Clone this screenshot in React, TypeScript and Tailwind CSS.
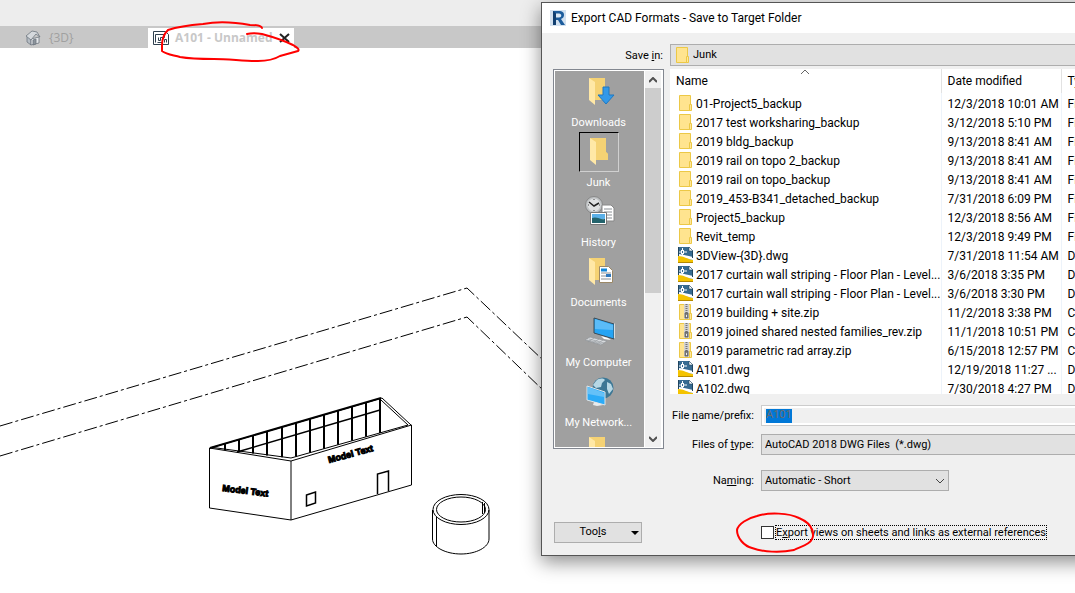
import React from "react";

type FileKind = "folder" | "dwg" | "zip";

const files: { name: string; date: string; kind: FileKind }[] = [
  { name: "01-Project5_backup", date: "12/3/2018 10:01 AM", kind: "folder" },
  { name: "2017 test worksharing_backup", date: "3/12/2018 5:10 PM", kind: "folder" },
  { name: "2019 bldg_backup", date: "9/13/2018 8:41 AM", kind: "folder" },
  { name: "2019 rail on topo 2_backup", date: "9/13/2018 8:41 AM", kind: "folder" },
  { name: "2019 rail on topo_backup", date: "9/13/2018 8:41 AM", kind: "folder" },
  { name: "2019_453-B341_detached_backup", date: "7/31/2018 6:09 PM", kind: "folder" },
  { name: "Project5_backup", date: "12/3/2018 8:56 AM", kind: "folder" },
  { name: "Revit_temp", date: "12/3/2018 9:49 PM", kind: "folder" },
  { name: "3DView-{3D}.dwg", date: "7/31/2018 11:54 AM", kind: "dwg" },
  { name: "2017 curtain wall striping - Floor Plan - Level...", date: "3/6/2018 3:35 PM", kind: "dwg" },
  { name: "2017 curtain wall striping - Floor Plan - Level...", date: "3/6/2018 3:30 PM", kind: "dwg" },
  { name: "2019 building + site.zip", date: "11/2/2018 3:38 PM", kind: "zip" },
  { name: "2019 joined shared nested families_rev.zip", date: "11/1/2018 10:51 PM", kind: "zip" },
  { name: "2019 parametric rad array.zip", date: "6/15/2018 12:57 PM", kind: "zip" },
  { name: "A101.dwg", date: "12/19/2018 11:27 ...", kind: "dwg" },
  { name: "A102.dwg", date: "7/30/2018 4:27 PM", kind: "dwg" },
];

const typeNames: Record<FileKind, string> = {
  folder: "File folder",
  dwg: "DWG File",
  zip: "Compressed",
};

function FileIcon({ kind }: { kind: FileKind }) {
  if (kind === "dwg") {
    return (
      <svg width="16" height="16" viewBox="0 0 16 16" className="shrink-0">
        <path d="M0 0h11l4 4v12H0z" fill="#376b91" />
        <path d="M11 0v4h4z" fill="#fff" stroke="#20455f" strokeWidth=".6" />
        <path d="M0 8c4 0 8 2 11 4l4 1v3H0z" fill="#f4c300" />
        <path d="M0 7c5 0 9 2 15 3v3C9 12 6 9 0 9z" fill="#fff" />
        <path d="M4.500 1v7M1 5h8" stroke="#fff" />
        <rect x="3.500" y="3.500" width="2" height="3" fill="#376b91" stroke="#fff" />
        <path d="M.5 0v9M14.500 4v7" stroke="#20455f" />
        <path d="M0 15.500h15" stroke="#b58a00" />
      </svg>
    );
  }
  return (
    <svg width="16" height="16" viewBox="0 0 16 16" className="shrink-0">
      <path d="M1.500 .5h11v15h-11z" fill="#ffe48f" stroke="#ecc846" />
      <path d="M11.500 9.500h2v6h-2z" fill="#ffe79c" stroke="#ecc846" />
      {kind === "zip" && (
        <>
          <path d="M6 0h5v15H6z" fill="#d2d2d2" />
          <path d="M8.500 0v9" stroke="#777" strokeWidth="2" strokeDasharray="1 1" />
          <path d="M7 9h3v5H7z" fill="#888" stroke="#555" strokeWidth=".7" />
          <path d="M8 11h1v2H8z" fill="#eee" />
        </>
      )}
    </svg>
  );
}

function PlaceFolder({ x = 0 }: { x?: number }) {
  return (
    <g transform={`translate(${x} 0)`}>
      <path d="M6 2h16v14l2 2v6H10z" fill="#f0c75e" />
      <path d="M6 2h16v14l2 2v6H12z" fill="#f5d274" />
      <path d="M6 2l6 4v23l-6-5z" fill="#ffe8a6" />
    </g>
  );
}

function Monitor() {
  return (
    <g>
      <path d="M11 2l20 6v15l-20-6z" fill="#25a4f4" stroke="#3b4a55" />
      <path d="M12 3l18 6v5L12 13z" fill="#5bbcf8" />
      <path d="M31 8l1-1v15l-1 1z" fill="#d9dde0" />
    </g>
  );
}

const places: { label: string; icon: React.ReactNode; active?: boolean }[] = [
  {
    label: "Downloads",
    icon: (
      <>
        <PlaceFolder />
        <path d="M20 11h6v8h5l-8 9-8-9h5z" fill="#3399e8" stroke="#1f78c0" />
      </>
    ),
  },
  { label: "Junk", icon: <PlaceFolder x={1} />, active: true },
  {
    label: "History",
    icon: (
      <>
        <circle cx="11" cy="9" r="7.500" fill="#dfe1e2" stroke="#bfc2c4" strokeWidth="2" />
        <circle cx="11" cy="9" r="8.500" stroke="#777" strokeWidth=".7" fill="none" />
        <path d="M6 6l5 4 5-3" fill="none" stroke="#222" strokeWidth="1.500" />
        <path d="M11 3v1M11 14v1M5 9h1M16 9h1" stroke="#444" />
        <path d="M19 9h9l3 3v13H19z" fill="#fff" stroke="#888" />
        <path d="M21 13h8M21 16h8M21 19h8M21 22h8" stroke="#8a8f94" />
        <path d="M7.500 16.500h16v12h-16z" fill="#fff" stroke="#777" />
        <path d="M9 18h13v5H9z" fill="#5bb0e8" />
        <path d="M9 22c5-2 8 2 13 1v4H9z" fill="#23636c" />
      </>
    ),
  },
  {
    label: "Documents",
    icon: (
      <>
        <PlaceFolder />
        <path d="M16.500 10.500h9l4 4v12h-13z" fill="#fff" stroke="#9b8866" />
        <path d="M18 17h10M18 20h10M18 23h10" stroke="#8a8f94" />
        <path d="M18 14h6" stroke="#1386d6" strokeWidth="3" />
        <path d="M23 18h5v3h-5z" fill="#3179bd" />
      </>
    ),
  },
  {
    label: "My Computer",
    icon: (
      <>
        <Monitor />
        <path d="M18 20l7 2 3 2-7-1z" fill="#fff" />
        <path d="M7 21l17 4-6 4-16-5z" fill="#d7dadd" stroke="#8f9498" strokeWidth=".7" />
        <path d="M6 23l15 4M4 24l15 4M11 22l-6 4M16 23l-6 4M20 24l-6 4" stroke="#8f9498" strokeWidth=".6" />
      </>
    ),
  },
  {
    label: "My Network...",
    icon: (
      <>
        <circle cx="20" cy="12" r="10.500" fill="#3c7795" />
        <path d="M13 5c3-3 7-3 9-1l-3 3-1 4-5 1-3-3zM24 6l4 2 2 5-4 5-2-5z" fill="#b7d8e5" />
        <path d="M4 10l18 6v13L4 24z" fill="#2cabf7" stroke="#dfe5e8" />
        <path d="M5 11l16 6v4L5 18z" fill="#65c1f8" />
        <path d="M11 26l4 1 5 2-6 1-4-1z" fill="#e8ebed" />
      </>
    ),
  },
];

function Chevron({ up, className }: { up?: boolean; className?: string }) {
  return (
    <svg width="10" height="6" viewBox="0 0 10 6" className={className}>
      <path d={up ? "M1 5l4-4 4 4" : "M1 1l4 4 4-4"} fill="none" stroke="currentColor" />
    </svg>
  );
}

function SitePlan() {
  const mullions = [225, 239, 253, 267, 282, 296, 310, 324, 338, 352, 366, 380];
  return (
    <svg width="1075" height="545" viewBox="0 48 1075 545" fill="none" stroke="#000" className="block">
      {/* property lines */}
      <g strokeDasharray="13 3 3 3">
        <path d="M0 426L467 288L545 362" />
        <path d="M0 456L467 317L545 392" />
      </g>

      {/* building */}
      <path d="M209.500 448v60L291 520V461z" />
      <path d="M291 520L411.500 485V425L291 461" />
      <path d="M210 448L382 398L411 425" />
      <path d="M213 447.500L291 458L408 425L381 400" />
      <path d="M210 448L381 398" strokeWidth="2" />
      <path d="M237 452L380 410" strokeWidth="1.500" />
      {mullions.map((x) => (
        <path
          key={x}
          strokeWidth="2"
          d={`M${x} ${448 - (x - 210) * 0.291}V${x < 291 ? 448 + (x - 210) * 0.13 : 458 - (x - 291) * 0.282}`}
        />
      ))}
      <path d="M306.500 495l9-3v11l-9 3z" strokeWidth="1.500" />
      <path d="M377.500 494v-20l11-3v20" strokeWidth="1.500" />
      <g fill="#000" strokeWidth="1" fontSize="9" fontWeight="700" fontFamily="Liberation Sans, sans-serif">
        <text transform="translate(222 491) rotate(7)">Model Text</text>
        <text transform="translate(329 463) rotate(-15)">Model Text</text>
      </g>

      {/* round tank */}
      <ellipse cx="461" cy="509.500" rx="28" ry="15" />
      <ellipse cx="461" cy="509.500" rx="24.500" ry="12.500" />
      <path d="M432.500 510v29c0 8 13 15 28.500 15s28-7 28-15v-29M436.500 517v29M482.500 502v12M484.500 503v10" />
    </svg>
  );
}

function PlacesBar() {
  return (
    <div className="flex h-[380px] border border-[#828790] bg-white p-px">
      <div className="flex-1 overflow-hidden bg-[#a0a0a0] pr-[2px] text-white">
        {places.map((place) => (
          <button key={place.label} className="flex h-[60px] w-full flex-col items-center justify-start pt-px">
            <span
              className={
                place.active
                  ? "flex size-10 shrink-0 items-center justify-center border border-t-black border-l-black border-r-[#d0d0d0] border-b-[#d0d0d0]"
                  : "flex size-10 shrink-0 items-center justify-center"
              }
            >
              <svg width="32" height="32" viewBox="0 0 32 32">{place.icon}</svg>
            </span>
            <span className="leading-[22px]">{place.label}</span>
          </button>
        ))}
        <div className="flex justify-center pt-1">
          <svg width="32" height="32" viewBox="0 0 32 32"><PlaceFolder /></svg>
        </div>
      </div>
      <div className="flex w-[18px] flex-col border-x border-white bg-[#f0f0f0] text-[#505050]">
        <button aria-label="Scroll up" className="flex h-[17px] items-center justify-center">
          <svg width="8" height="6" viewBox="0 0 8 6"><path d="M0 5l4-4 4 4" fill="none" stroke="currentColor" strokeWidth="2" /></svg>
        </button>
        <div className="h-[205px] bg-[#cdcdcd]" />
        <button aria-label="Scroll down" className="mt-auto flex h-[17px] items-center justify-center">
          <svg width="8" height="6" viewBox="0 0 8 6"><path d="M0 1l4 4 4-4" fill="none" stroke="currentColor" strokeWidth="2" /></svg>
        </button>
      </div>
    </div>
  );
}

function FileList() {
  return (
    <div className="h-[325px] overflow-hidden bg-white font-[Roboto,sans-serif] text-[12px]">
      <table className="w-full table-fixed border-collapse text-left whitespace-nowrap">
        <thead>
          <tr className="h-6">
            <th className="relative w-[271px] border-r border-[#e2e2e2] p-0 pl-[6px] font-normal">
              Name
              <Chevron up className="absolute top-0 left-1/2 -translate-x-1/2 text-[#666]" />
            </th>
            <th className="w-[120px] border-r border-[#e2e2e2] p-0 pl-[6px] font-normal">Date modified</th>
            <th className="p-0 pl-[6px] font-normal">Type</th>
          </tr>
        </thead>
        <tbody>
          {files.map((file, i) => (
            <tr key={i} className="h-[19px] leading-4">
              <td className="border-r border-[#edf3fa] p-0 pl-2">
                <div className="flex h-[19px] items-center gap-[2px]">
                  <FileIcon kind={file.kind} />
                  <span className="pt-[2px]">{file.name}</span>
                </div>
              </td>
              <td className="border-r border-[#edf3fa] p-0 pt-[2px] pl-[6px]">{file.date}</td>
              <td className="p-0 pt-[2px] pl-[6px]">{typeNames[file.kind]}</td>
            </tr>
          ))}
        </tbody>
      </table>
    </div>
  );
}

function ExportDialog() {
  return (
    <div className="absolute top-[2px] left-[541px] w-[700px] border border-[#555] bg-[#f0f0f0] font-[Roboto,sans-serif] text-[11px] text-black shadow-[0_6px_18px_rgba(0,0,0,0.45)]">
      <div className="flex h-[30px] items-center gap-[5px] bg-white pl-2 text-[12px]">
        <svg width="16" height="16" viewBox="0 0 16 16">
          <path d="M0 0h16v16H0z" fill="#d3e1ef" />
          <path d="M3 1h6c3 0 5 1 5 4 0 2-1 3-3 4l4 6h-4L8 10H6v5H3z" fill="#1c5c9c" />
          <path d="M6 3.500h3c3 0 3 4 0 4H6z" fill="#dce9f5" />
          <path d="M3 1l3 2.500V15H3z" fill="#123f70" />
        </svg>
        <h1>Export CAD Formats - Save to Target Folder</h1>
      </div>

      <div className="pt-[11px] pr-3 pb-3 pl-[11px]">
        <div className="flex items-center">
          <label htmlFor="save-in" className="w-[110px] pt-[2px] text-right">Save <u>i</u>n:</label>
          <div className="relative ml-[7px] flex-1">
            <select id="save-in" className="block h-[22px] w-full appearance-none border border-[#adadad] bg-[#e1e1e1] pl-[22px]">
              <option>Junk</option>
            </select>
            <span className="pointer-events-none absolute top-[3px] left-[5px]"><FileIcon kind="folder" /></span>
          </div>
        </div>

        <div className="mt-[3px] flex gap-[6px]">
          <div className="w-[111px] shrink-0">
            <PlacesBar />
          </div>
          <div className="min-w-0 flex-1">
            <FileList />
            <div className="mt-[11px] flex items-center gap-[7px]">
              <label htmlFor="file-name" className="w-[84px] pt-[2px] text-right whitespace-nowrap">File <u>n</u>ame/prefix:</label>
              <div className="flex h-[21px] flex-1 items-center border border-[#ccc] bg-[#f0f0f0] pl-1 outline-2 -outline-offset-3 outline-white">
                <input id="file-name" defaultValue="A101" className="field-sizing-content h-[14px] bg-[#0078d7] text-[#6d6d6d] outline-none" />
              </div>
            </div>
            <div className="mt-2 flex items-center gap-[7px]">
              <label htmlFor="file-type" className="w-[84px] pt-[2px] text-right">Files of <u>t</u>ype:</label>
              <select id="file-type" className="h-[21px] flex-1 appearance-none border border-[#adadad] bg-[#e1e1e1] pt-px pl-[3px] whitespace-pre">
                <option>{"AutoCAD 2018 DWG Files\u00a0 (*.dwg)"}</option>
              </select>
            </div>
            <div className="mt-[15px] flex items-center gap-[7px]">
              <label htmlFor="naming" className="w-[84px] pt-[2px] text-right">Na<u>m</u>ing:</label>
              <div className="relative w-[188px]">
                <select id="naming" className="block h-[21px] w-full appearance-none border border-[#adadad] bg-[#e1e1e1] pt-px pl-[3px]">
                  <option>Automatic - Short</option>
                </select>
                <Chevron className="pointer-events-none absolute top-2 right-1 text-[#444]" />
              </div>
            </div>
          </div>
        </div>

        <div className="mt-[31px] flex items-center">
          <button className="ml-px flex h-[21px] w-[88px] items-center border border-[#adadad] bg-[#e1e1e1] pr-[2px]">
            <span className="flex-1 text-center">Too<u>l</u>s</span>
            <svg width="8" height="4" viewBox="0 0 8 4"><path d="M0 0h8L4 4z" /></svg>
          </button>
          <input id="external" type="checkbox" className="ml-[119px] size-[13px] appearance-none border border-[#333] bg-white" />
          <label htmlFor="external" className="ml-px border border-dotted border-black leading-[13px]">
            E<u>x</u>port views on sheets and links as external references
          </label>
        </div>
      </div>
    </div>
  );
}

export default function App() {
  return (
    <div className="relative min-h-screen overflow-hidden bg-white">
      <div className="h-[26px] bg-[#ededed]" />
      <nav className="flex h-[22px] items-end bg-[#c8c8c8] font-['Open_Sans',sans-serif] text-[12px]">
        <button className="flex h-full w-[148px] items-center gap-2 pt-[2px] pl-[25px] text-[#a0a0a0]">
          <svg width="16" height="16" viewBox="0 0 16 16" stroke="#6f7780" strokeWidth=".8">
            <path d="M2 6l4 3v6l-4-3z" fill="#b5bcc3" />
            <path d="M6 9l8-2v6l-8 2z" fill="#e3e6e9" />
            <path d="M1 6l6-5 5 1 3 5-4-3-5 6z" fill="#d5d9dd" />
            <path d="M8 10l3-1v5l-3 1z" fill="#8b939b" />
          </svg>
          {"{3D}"}
        </button>
        <div className="flex h-5 items-center gap-[6px] bg-white pr-1 pl-[5px]">
          <svg width="16" height="14" viewBox="0 0 16 14" fill="none" stroke="#30414f">
            <path d="M.5 .5h12l3 3v10H.5z" />
            <path d="M2.500 11.500v-8h9v3h-4v3h-2v-3M4.500 11.500h5v-3M11.500 11.500V8.500h2v3" />
          </svg>
          <button className="font-bold text-[#c8c8c8]">A101 - Unnamed</button>
          <button aria-label="Close tab">
            <svg width="11" height="10" viewBox="0 0 11 10"><path d="M1 1l9 8M10 1L1 9" stroke="#222" strokeWidth="2" /></svg>
          </button>
        </div>
      </nav>
      <SitePlan />
      <ExportDialog />

      {/* hand-drawn markup over the tab and the checkbox */}
      <svg
        width="1075"
        height="593"
        viewBox="0 0 1075 593"
        fill="none"
        stroke="#f00"
        strokeWidth="2"
        strokeLinecap="round"
        strokeLinejoin="round"
        className="pointer-events-none absolute top-0 left-0"
      >
        <path d="M262 28c-1-3-6-3-12-3-16-3-32-4-47-1-12 1-26 3-35 6-4 4-6 9-6 15v6c5 4 12 4 18 6 11 2 22 2 34 2 15 0 29 2 44 2 10 0 17-2 22-5l18-5c2-2-2-4-5-6-8-4-20-8-31-11-6-1-11-1-15 0" />
        <path d="M812 530c-1-4-6-9-13-12-10-5-30-6-42-2-9 2-19 8-20 14 0 8 7 16 15 18 11 4 28 5 42 2 5-3 16-5 18-11 2-3 1-7 0-10z" />
      </svg>
    </div>
  );
}
